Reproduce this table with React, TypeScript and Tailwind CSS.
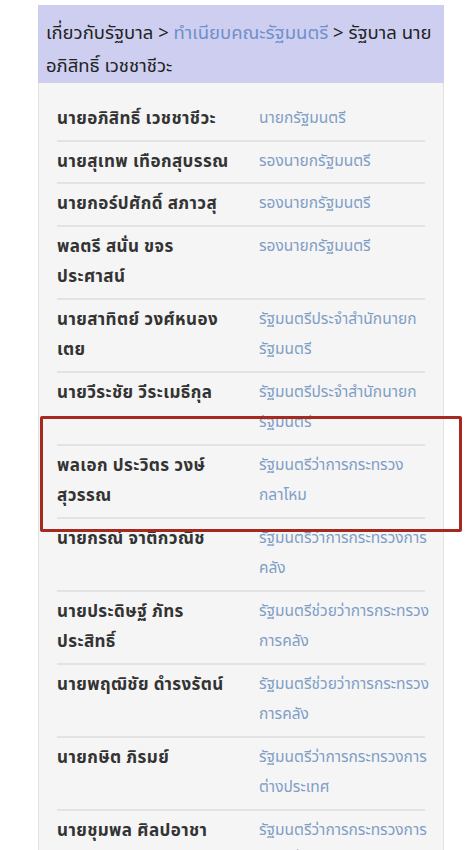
import React from 'react';

type Minister = {
  name: string[];
  position: string[];
};

// line breaks follow the narrow mobile columns of the original page
const ministers: Minister[] = [
  { name: ['นายอภิสิทธิ์ เวชชาชีวะ'], position: ['นายกรัฐมนตรี'] },
  { name: ['นายสุเทพ เทือกสุบรรณ'], position: ['รองนายกรัฐมนตรี'] },
  { name: ['นายกอร์ปศักดิ์ สภาวสุ'], position: ['รองนายกรัฐมนตรี'] },
  { name: ['พลตรี สนั่น ขจร', 'ประศาสน์'], position: ['รองนายกรัฐมนตรี'] },
  { name: ['นายสาทิตย์ วงศ์หนอง', 'เตย'], position: ['รัฐมนตรีประจำสำนักนายก', 'รัฐมนตรี'] },
  { name: ['นายวีระชัย วีระเมธีกุล'], position: ['รัฐมนตรีประจำสำนักนายก', 'รัฐมนตรี'] },
  { name: ['พลเอก ประวิตร วงษ์', 'สุวรรณ'], position: ['รัฐมนตรีว่าการกระทรวง', 'กลาโหม'] },
  { name: ['นายกรณ์ จาติกวณิช'], position: ['รัฐมนตรีว่าการกระทรวงการ', 'คลัง'] },
  { name: ['นายประดิษฐ์ ภัทร', 'ประสิทธิ์'], position: ['รัฐมนตรีช่วยว่าการกระทรวง', 'การคลัง'] },
  { name: ['นายพฤฒิชัย ดำรงรัตน์'], position: ['รัฐมนตรีช่วยว่าการกระทรวง', 'การคลัง'] },
  { name: ['นายกษิต ภิรมย์'], position: ['รัฐมนตรีว่าการกระทรวงการ', 'ต่างประเทศ'] },
  { name: ['นายชุมพล ศิลปอาชา'], position: ['รัฐมนตรีว่าการกระทรวงการ', 'ท่องเที่ยวและกีฬา'] },
];

const thaiFont = { fontFamily: '"Noto Sans Thai", "Noto Sans", "DejaVu Sans", sans-serif' };

export default function App() {
  return (
    <div className="h-[850px] bg-white pt-[5px] relative overflow-hidden" style={thaiFont}>
      <div className="ml-[38px] w-[406px]">
        {/* breadcrumb */}
        <div className="bg-[#cecff0] pl-2 pr-1 pt-3 text-[18.5px] leading-[33px] text-[#222]">
          เกี่ยวกับรัฐบาล &gt; <span className="text-[#6f8fc9]">ทำเนียบคณะรัฐมนตรี</span> &gt; รัฐบาล นาย
          <br />
          อภิสิทธิ์ เวชชาชีวะ
        </div>

        <div className="bg-[#f5f5f5] border-x border-[#e2e2e2] px-[18px] pt-[16px]">
          {ministers.map((m) => (
            <div
              key={m.name.join('')}
              className="grid grid-cols-[202px_1fr] py-[5px] border-b-2 border-[#e3e3e3] leading-[30.5px]"
            >
              <div className="text-[17px] font-bold tracking-[0.4px] text-[#333] whitespace-nowrap">
                {m.name.map((line) => (
                  <div key={line}>{line}</div>
                ))}
              </div>
              <div className="text-[15.5px] text-[#7f9ec6] whitespace-nowrap">
                {m.position.map((line) => (
                  <div key={line}>{line}</div>
                ))}
              </div>
            </div>
          ))}
        </div>
      </div>

      {/* highlight box */}
      <div className="absolute left-[40px] top-[416px] w-[422px] h-[116px] border-[3px] border-[#a5291f] rounded-[2px]" />
    </div>
  );
}
